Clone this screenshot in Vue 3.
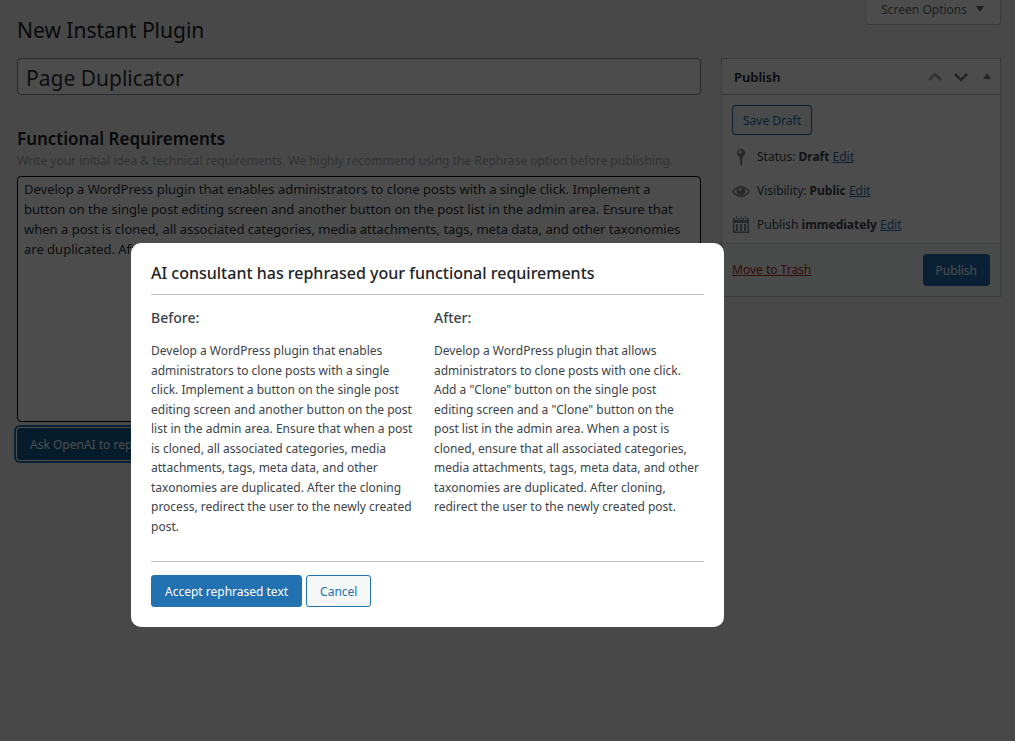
<template>
  <div class="screen">
    <div class="screen-meta">
      <button type="button" class="screen-options">
        Screen Options
        <svg width="10" height="8" viewBox="0 0 10 8"><path d="M1 1h8L5 7z" fill="currentColor" /></svg>
      </button>
    </div>

    <h1>New Instant Plugin</h1>

    <div class="columns">
      <main class="main-column">
        <input v-model="title" type="text" class="title-input" aria-label="Title">

        <h2><label for="requirements">Functional Requirements</label></h2>
        <p class="description">Write your initial idea &amp; technical requirements. We highly recommend using the Rephrase option before publishing.</p>
        <textarea id="requirements" v-model="requirements"></textarea>
        <button type="button" class="button button-primary focused">Ask OpenAI to rephrase</button>
      </main>

      <aside class="postbox">
        <div class="postbox-header">
          <h3>Publish</h3>
          <div class="handle-actions">
            <button type="button" aria-label="Move up" class="handle muted">
              <svg width="14" height="10" viewBox="0 0 14 10"><path d="M1 8l6-6 6 6" fill="none" stroke="currentColor" stroke-width="2.500" /></svg>
            </button>
            <button type="button" aria-label="Move down" class="handle">
              <svg width="14" height="10" viewBox="0 0 14 10"><path d="M1 2l6 6 6-6" fill="none" stroke="currentColor" stroke-width="2.500" /></svg>
            </button>
            <button type="button" aria-label="Toggle panel" class="handle">
              <svg width="14" height="10" viewBox="0 0 14 10"><path d="M3 7h8L7 1z" fill="currentColor" /></svg>
            </button>
          </div>
        </div>

        <div class="postbox-body">
          <button type="button" class="button small">Save Draft</button>
          <ul>
            <li v-for="row in rows" :key="row.icon">
              <svg width="18" height="18" viewBox="0 0 18 18" fill="currentColor" fill-rule="evenodd">
                <path v-for="d in icons[row.icon]" :key="d" :d="d" />
              </svg>
              <span>{{ row.label }} <strong>{{ row.value }}</strong> <a href="#">Edit</a></span>
            </li>
          </ul>
        </div>

        <div class="postbox-footer">
          <a href="#" class="trash">Move to Trash</a>
          <button type="button" class="button button-primary">Publish</button>
        </div>
      </aside>
    </div>

    <div v-if="showModal" class="overlay">
      <div class="modal" role="dialog" aria-labelledby="modal-title">
        <h2 id="modal-title">AI consultant has rephrased your functional requirements</h2>
        <div class="compare">
          <section>
            <h3>Before:</h3>
            <p>{{ requirements }}</p>
          </section>
          <section>
            <h3>After:</h3>
            <p>{{ rephrased }}</p>
          </section>
        </div>
        <div class="modal-actions">
          <button type="button" class="button button-primary" @click="accept">Accept rephrased text</button>
          <button type="button" class="button" @click="showModal = false">Cancel</button>
        </div>
      </div>
    </div>
  </div>
</template>

<script setup>
import { ref } from 'vue';

const title = ref('Page Duplicator');
const requirements = ref('Develop a WordPress plugin that enables administrators to clone posts with a single click. Implement a button on the single post editing screen and another button on the post list in the admin area. Ensure that when a post is cloned, all associated categories, media attachments, tags, meta data, and other taxonomies are duplicated. After the cloning process, redirect the user to the newly created post.');
const rephrased = ref('Develop a WordPress plugin that allows administrators to clone posts with one click. Add a "Clone" button on the single post editing\u00a0screen and a "Clone" button on the post list in the admin area. When a post is cloned, ensure that all associated categories, media attachments, tags, meta data, and other taxonomies are duplicated. After cloning, redirect the user to the newly created post.');
const showModal = ref(true);

const rows = [
  { icon: 'pin', label: 'Status:', value: 'Draft' },
  { icon: 'eye', label: 'Visibility:', value: 'Public' },
  { icon: 'calendar', label: 'Publish', value: 'immediately' }
];

const icons = {
  pin: [
    'M9 1a4 4 0 0 1 1.500 7.700L10 17H8.500L7.500 8.700A4 4 0 0 1 9 1zM8 2.500a1.500 1.500 0 1 0 0 3 1.500 1.500 0 0 0 0-3z'
  ],
  eye: [
    'M9 4c4 0 7 2.500 9 5.500-2 3.500-5 5.500-9 5.500s-7-2-9-5.500C2 6.500 5 4 9 4zM9 5.200c-3 0-5.500 1.800-7.200 4.300C3.500 12.200 6 13.600 9 13.600s5.500-1.400 7.200-4.100C14.500 7 12 5.200 9 5.200z',
    'M9 4.500a4.500 4.500 0 1 1 0 9 4.500 4.500 0 0 1 0-9zM8 6a1.500 1.500 0 1 0 0 3 1.500 1.500 0 0 0 0-3z'
  ],
  calendar: [
    'M1 2h2v2h3V2h1.500v2h3V2H12v2h3V2h2v15H1zM2.500 7v8.500h13V7z',
    'M4 0h1v3H4zM8.500 0h1v3h-1zM13 0h1v3h-1zM4 8h2v7H4zM8 8h2v7H8zM12 8h2v7h-2z'
  ]
};

const accept = () => {
  requirements.value = rephrased.value;
  showModal.value = false;
};
</script>

<style>
body {
  margin: 0;
  background: #f0f0f1;
}
</style>

<style scoped>
* {
  box-sizing: border-box;
}

.screen {
  min-height: 100vh;
  padding: 0 14px 0 17px;
  font: 12px/20px "Segoe UI", "Noto Sans", "Open Sans", sans-serif;
  color: #3c434a;
}

button,
input,
textarea {
  font-family: inherit;
}

h1,
h2,
h3,
p,
ul {
  margin: 0;
  padding: 0;
}

.screen-meta {
  display: flex;
  justify-content: flex-end;
  height: 15px;
}

.screen-options {
  display: flex;
  align-items: center;
  gap: 8px;
  height: 25px;
  padding: 0 15px 6px;
  border: 1px solid #c3c4c7;
  border-top: 0;
  border-radius: 0 0 4px 4px;
  background: #fff;
  color: #646970;
  font-size: 12px;
}

h1 {
  margin-bottom: 13px;
  color: #1d2327;
  font-size: 21px;
  font-weight: 400;
  line-height: 30px;
}

.columns {
  display: flex;
  align-items: flex-start;
  gap: 20px;
}

.main-column {
  flex: 1;
  min-width: 0;
}

.title-input {
  display: block;
  width: 100%;
  height: 37px;
  padding: 4px 8px 2px;
  border: 1px solid #8c8f94;
  border-radius: 4px;
  background: #fff;
  color: #2c3338;
  font-size: 21px;
}

.main-column h2 {
  margin-top: 32px;
  color: #1d2327;
  font-size: 17px;
  font-weight: 600;
  line-height: 24px;
}

.description {
  margin-bottom: 5px;
  color: #a7aaad;
}

textarea {
  display: block;
  width: 100%;
  height: 246px;
  margin-bottom: 6px;
  padding: 2px 6px;
  border: 1px solid #000;
  border-radius: 4px;
  background: #fff;
  color: #2c3338;
  font-size: 13px;
  line-height: 20px;
  resize: none;
}

.button {
  height: 32px;
  padding: 0 12px;
  border: 1px solid #2271b1;
  border-radius: 3px;
  background: #f6f7f7;
  color: #2271b1;
  font-size: 12px;
}

.button.small {
  height: 30px;
  padding: 0 10px;
}

.button-primary {
  background: #2271b1;
  color: #fff;
}

.button.focused {
  border-color: #135e96;
  background: #135e96;
  box-shadow: 0 0 0 1px #fff, 0 0 0 3px #2271b1;
}

.postbox {
  width: 280px;
  border: 1px solid #c3c4c7;
  background: #fff;
}

.postbox-header {
  display: flex;
  align-items: center;
  justify-content: space-between;
  height: 36px;
  padding: 0 6px 0 12px;
  border-bottom: 1px solid #c3c4c7;
}

.postbox-header h3 {
  color: #1d2327;
  font-size: 13px;
  font-weight: 600;
}

.handle-actions {
  display: flex;
  gap: 12px;
}

.handle {
  display: flex;
  align-items: center;
  padding: 0;
  border: 0;
  background: none;
  color: #787c82;
}

.handle.muted {
  color: #a7aaad;
}

.postbox-body {
  padding: 10px 10px 1px;
}

ul {
  margin-top: 5px;
  list-style: none;
}

li {
  display: flex;
  align-items: center;
  gap: 7px;
  height: 34px;
}

li svg {
  color: #82878c;
}

a {
  color: #2271b1;
}

.postbox-footer {
  display: flex;
  align-items: center;
  justify-content: space-between;
  padding: 10px;
  border-top: 1px solid #dcdcde;
  background: #f6f7f7;
}

.trash {
  color: #b32d2e;
}

.overlay {
  position: fixed;
  inset: 0 0 0 -160px;
  display: flex;
  align-items: flex-start;
  justify-content: center;
  padding-top: 243px;
  background: rgba(0, 0, 0, 0.7);
}

.modal {
  width: 593px;
  padding: 20px;
  border-radius: 10px;
  background: #fff;
}

.modal h2 {
  padding-bottom: 11px;
  border-bottom: 1px solid #c3c4c7;
  color: #1d2327;
  font-size: 16px;
  font-weight: 500;
  line-height: 20px;
}

.compare {
  display: grid;
  grid-template-columns: 1fr 1fr;
  gap: 13px;
  padding: 13px 0 25px;
  border-bottom: 1px solid #c3c4c7;
}

.compare h3 {
  margin-bottom: 13px;
  font-size: 14px;
  font-weight: 500;
  line-height: 20px;
}

.compare p {
  padding-right: 4px;
  line-height: 1.625;
}

.modal-actions {
  display: flex;
  gap: 4px;
  padding-top: 13px;
}

.modal-actions .button {
  padding: 0 13px;
}
</style>
